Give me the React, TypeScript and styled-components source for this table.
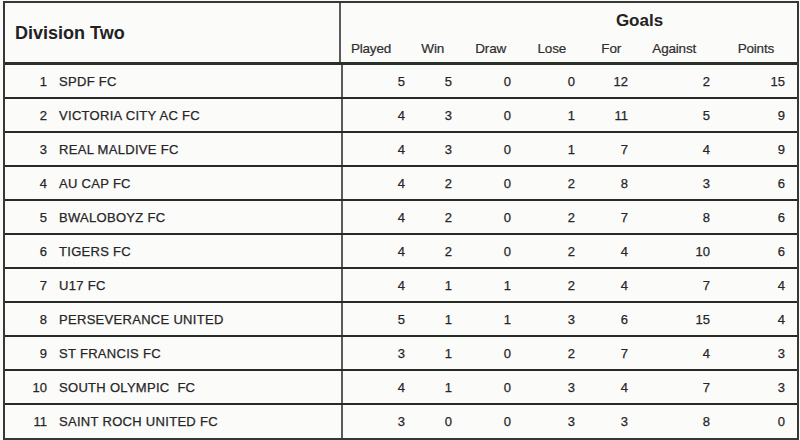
import styled, { createGlobalStyle } from "styled-components";

const Global = createGlobalStyle`
  html, body {
    margin: 0;
    padding: 0;
    background: #fafaf8;
  }
  body {
    font-family: "Liberation Sans", Arial, sans-serif;
    color: #262626;
  }
`;

const Page = styled.div`
  padding: 1px 0 0 3px;
`;

const Sheet = styled.div`
  width: 792px;
  border: 2px solid #363836;
  background: #fbfbfa;
`;

const NUM_COLS = "66px 47px 59px 64px 53px 82px 79px";

const HeadRow = styled.div`
  display: flex;
  height: 59px;
  border-bottom: 3px solid #283028;
`;

const TitleCell = styled.div`
  width: 336px;
  flex: none;
  border-right: 2px solid #5a5a5a;
  display: flex;
  align-items: center;
  padding-left: 10px;
  padding-top: 2px;
  box-sizing: border-box;
  font-size: 18px;
  font-weight: 700;
  color: #222;
`;

const StatsHead = styled.div`
  flex: 1;
  display: grid;
  grid-template-columns: ${NUM_COLS};
  grid-template-rows: 28px 31px;
`;

const Goals = styled.div`
  grid-column: 5 / 7;
  grid-row: 1;
  align-self: end;
  text-align: center;
  padding-right: 10px;
  font-size: 17px;
  font-weight: 700;
  color: #222;
`;

const ColLabel = styled.div<{ $hp: number }>`
  grid-row: 2;
  text-align: right;
  padding-right: ${(p) => p.$hp}px;
  padding-top: 10px;
  font-size: 13.5px;
  color: #2e2e2e;
  letter-spacing: -0.2px;
  -webkit-text-stroke: 0.2px #2e2e2e;
`;

const Row = styled.div`
  display: flex;
  height: 34px;
  box-sizing: border-box;
  border-bottom: 2px solid #262b26;
  &:last-child {
    height: 33px;
    border-bottom: none;
  }
`;

const NameCell = styled.div`
  width: 336px;
  flex: none;
  border-right: 2px solid #5a5a5a;
  display: flex;
  align-items: center;
  font-size: 13px;
  color: #262626;
  -webkit-text-stroke: 0.25px #262626;
`;

const Rank = styled.span`
  width: 42px;
  text-align: right;
  flex: none;
`;

const TeamName = styled.span`
  margin-left: 12px;
  letter-spacing: 0.3px;
  white-space: pre;
`;

const NumCells = styled.div`
  flex: 1;
  display: grid;
  grid-template-columns: ${NUM_COLS};
  align-items: center;
`;

const Num = styled.div<{ $np: number }>`
  text-align: right;
  padding-right: ${(p) => p.$np}px;
  font-size: 13px;
  color: #262626;
  -webkit-text-stroke: 0.25px #262626;
`;

const columns = [
  { label: "Played", hp: 16, np: 4 },
  { label: "Win", hp: 10, np: 4 },
  { label: "Draw", hp: 7, np: 4 },
  { label: "Lose", hp: 11, np: 4 },
  { label: "For", hp: 9, np: 4 },
  { label: "Against", hp: 16, np: 4 },
  { label: "Points", hp: 17, np: 8 },
];

const teams: [string, number[]][] = [
  ["SPDF FC", [5, 5, 0, 0, 12, 2, 15]],
  ["VICTORIA CITY AC FC", [4, 3, 0, 1, 11, 5, 9]],
  ["REAL MALDIVE FC", [4, 3, 0, 1, 7, 4, 9]],
  ["AU CAP FC", [4, 2, 0, 2, 8, 3, 6]],
  ["BWALOBOYZ FC", [4, 2, 0, 2, 7, 8, 6]],
  ["TIGERS FC", [4, 2, 0, 2, 4, 10, 6]],
  ["U17 FC", [4, 1, 1, 2, 4, 7, 4]],
  ["PERSEVERANCE UNITED", [5, 1, 1, 3, 6, 15, 4]],
  ["ST FRANCIS FC", [3, 1, 0, 2, 7, 4, 3]],
  ["SOUTH OLYMPIC  FC", [4, 1, 0, 3, 4, 7, 3]],
  ["SAINT ROCH UNITED FC", [3, 0, 0, 3, 3, 8, 0]],
];

export default function App() {
  return (
    <Page>
      <Global />
      <Sheet>
        <HeadRow>
          <TitleCell>Division Two</TitleCell>
          <StatsHead>
            <Goals>Goals</Goals>
            {columns.map((c) => (
              <ColLabel key={c.label} $hp={c.hp}>
                {c.label}
              </ColLabel>
            ))}
          </StatsHead>
        </HeadRow>
        {teams.map(([name, vals], i) => (
          <Row key={name}>
            <NameCell>
              <Rank>{i + 1}</Rank>
              <TeamName>{name}</TeamName>
            </NameCell>
            <NumCells>
              {vals.map((v, j) => (
                <Num key={j} $np={columns[j].np}>
                  {v}
                </Num>
              ))}
            </NumCells>
          </Row>
        ))}
      </Sheet>
    </Page>
  );
}
